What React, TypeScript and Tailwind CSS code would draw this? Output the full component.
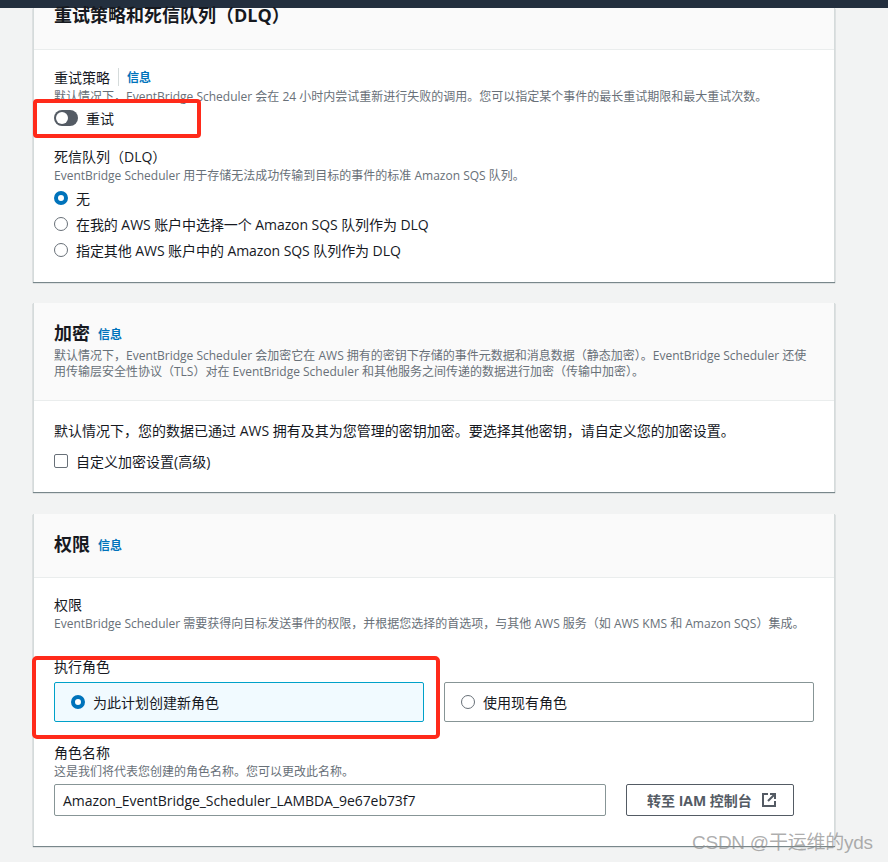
import React from 'react';

const font = { fontFamily: '"Open Sans", "Noto Sans CJK SC", sans-serif' };

function Info({ className = '' }: { className?: string }) {
  return <span className={`text-[12px] leading-[16px] font-bold text-[#0073bb] ${className}`}>信息</span>;
}

function Radio({ checked = false }: { checked?: boolean }) {
  if (checked) {
    return <span className="w-[14px] h-[14px] rounded-full border-[4px] border-[#0073bb] bg-white shrink-0" />;
  }
  return <span className="w-[14px] h-[14px] rounded-full border border-[#687078] bg-white shrink-0" />;
}

function RadioRow({ checked, label }: { checked?: boolean; label: string }) {
  return (
    <div className="flex items-center gap-2 h-[26px] text-[14px] tracking-[-0.07px] text-[#16191f]">
      <Radio checked={checked} />
      <span>{label}</span>
    </div>
  );
}

function Card({ children, className = '' }: { children: React.ReactNode; className?: string }) {
  return (
    <div className={`w-[802px] bg-white border-l border-r border-[#d5dbdb] shadow-[0_1px_1px_0_rgba(0,28,36,0.5)] ${className}`}>
      {children}
    </div>
  );
}

export default function App() {
  return (
    <div className="relative w-[888px] h-[862px] overflow-hidden bg-[#f2f3f3]" style={font}>
      <div className="h-2 bg-[#232f3e]" />
      <div className="pl-[33px]">
        <Card>
          <div className="h-[42px] bg-[#fafafa] border-b border-[#eaeded] px-5 text-[18px] leading-[14px] font-bold text-[#16191f]">
            重试策略和死信队列（DLQ）
          </div>
          <div className="h-[232px] px-5 pt-[17px]">
            <div className="flex items-center h-5 text-[14px] text-[#16191f]">
              <span>重试策略</span>
              <span className="w-px h-[18px] bg-[#d5dbdb] mx-2" />
              <Info className="mt-[2px]" />
            </div>
            <div className="text-[12px] leading-[18px] text-[#687078] mt-[1px]">
              默认情况下，EventBridge Scheduler 会在 24 小时内尝试重新进行失败的调用。您可以指定某个事件的最长重试期限和最大重试次数。
            </div>
            <div className="flex items-center gap-2 h-5 mt-[2px] text-[14px] text-[#16191f]">
              <span className="flex items-center w-6 h-4 rounded-full bg-[#545b64] pl-[2px]">
                <span className="w-3 h-3 rounded-full bg-white" />
              </span>
              <span>重试</span>
            </div>
            <div className="text-[14px] leading-5 text-[#16191f] mt-[19px]">死信队列（DLQ）</div>
            <div className="text-[12px] leading-[18px] text-[#687078]">
              EventBridge Scheduler 用于存储无法成功传输到目标的事件的标准 Amazon SQS 队列。
            </div>
            <div>
              <RadioRow checked label="无" />
              <RadioRow label="在我的 AWS 账户中选择一个 Amazon SQS 队列作为 DLQ" />
              <RadioRow label="指定其他 AWS 账户中的 Amazon SQS 队列作为 DLQ" />
            </div>
          </div>
        </Card>

        <Card className="mt-[21px]">
          <div className="h-[98px] bg-[#fafafa] border-b border-[#eaeded] px-5 pt-[18px]">
            <div className="flex items-center gap-2 h-6">
              <span className="text-[18px] font-bold text-[#16191f]">加密</span>
              <Info className="mt-[4px]" />
            </div>
            <div className="text-[12px] leading-[16px] text-[#687078] mt-[3px]">
              默认情况下，EventBridge Scheduler 会加密它在 AWS 拥有的密钥下存储的事件元数据和消息数据（静态加密）。EventBridge Scheduler 还使用传输层安全性协议（TLS）对在 EventBridge Scheduler 和其他服务之间传递的数据进行加密（传输中加密）。
            </div>
          </div>
          <div className="h-[91px] px-5 pt-[20px]">
            <div className="text-[14px] leading-5 text-[#16191f]">
              默认情况下，您的数据已通过 AWS 拥有及其为您管理的密钥加密。要选择其他密钥，请自定义您的加密设置。
            </div>
            <div className="flex items-center gap-2 mt-[10px] h-5 text-[14px] text-[#16191f]">
              <span className="w-[14px] h-[14px] rounded-[2px] border border-[#687078] bg-white" />
              <span>自定义加密设置(高级)</span>
            </div>
          </div>
        </Card>

        <Card className="mt-[22px]">
          <div className="h-[64px] bg-[#fafafa] border-b border-[#eaeded] px-5 pt-[18px]">
            <div className="flex items-center gap-2 h-6">
              <span className="text-[18px] font-bold text-[#16191f]">权限</span>
              <Info className="mt-[4px]" />
            </div>
          </div>
          <div className="h-[268px] px-5 pt-[17px]">
            <div className="text-[14px] leading-5 text-[#16191f]">权限</div>
            <div className="text-[12px] leading-[18px] text-[#687078]">
              EventBridge Scheduler 需要获得向目标发送事件的权限，并根据您选择的首选项，与其他 AWS 服务（如 AWS KMS 和 Amazon SQS）集成。
            </div>
            <div className="text-[14px] leading-5 text-[#16191f] mt-[24px]">执行角色</div>
            <div className="flex gap-5 mt-[5px]">
              <div className="flex items-center gap-2 w-[370px] h-10 pl-[16px] rounded-[2px] border border-[#00a1c9] bg-[#f1faff] text-[14px] text-[#16191f]">
                <Radio checked />
                <span>为此计划创建新角色</span>
              </div>
              <div className="flex items-center gap-2 w-[370px] h-10 pl-[16px] rounded-[2px] border border-[#879596] bg-white text-[14px] text-[#16191f]">
                <Radio />
                <span>使用现有角色</span>
              </div>
            </div>
            <div className="text-[14px] leading-5 text-[#16191f] mt-[21px]">角色名称</div>
            <div className="text-[12px] leading-[18px] text-[#687078]">这是我们将代表您创建的角色名称。您可以更改此名称。</div>
            <div className="flex gap-5 mt-[3px]">
              <div className="flex items-center w-[552px] h-8 px-2 rounded-[2px] border border-[#879596] bg-white text-[14px] tracking-[-0.06px] text-[#16191f]">
                Amazon_EventBridge_Scheduler_LAMBDA_9e67eb73f7
              </div>
              <div className="flex items-center gap-[10px] w-[168px] h-8 pl-5 rounded-[2px] border border-[#545b64] bg-white text-[14px] font-bold text-[#545b64]">
                <span>转至 IAM 控制台</span>
                <svg width="14" height="14" viewBox="0 0 14 14" fill="none" stroke="#545b64" strokeWidth="2">
                  <path d="M6 1H1v12h12V8" />
                  <path d="M8 1h5v5M13 1L6 8" />
                </svg>
              </div>
            </div>
          </div>
        </Card>
      </div>

      {/* red annotation boxes */}
      <div className="absolute left-[33px] top-[99px] w-[168px] h-[39px] rounded-[4px] border-[4px] border-[#ff2a1a]" />
      <div className="absolute left-[32px] top-[656px] w-[408px] h-[83px] rounded-[5px] border-[4px] border-[#ff2a1a]" />

      {/* watermark */}
      <div className="absolute left-[692px] top-[831px] text-[19px] leading-6 tracking-[-0.25px] text-[#8a8a8a]/70" style={{ fontFamily: '"Liberation Sans", "Noto Sans CJK SC", sans-serif' }}>
        CSDN @干运维的yds
      </div>
    </div>
  );
}
